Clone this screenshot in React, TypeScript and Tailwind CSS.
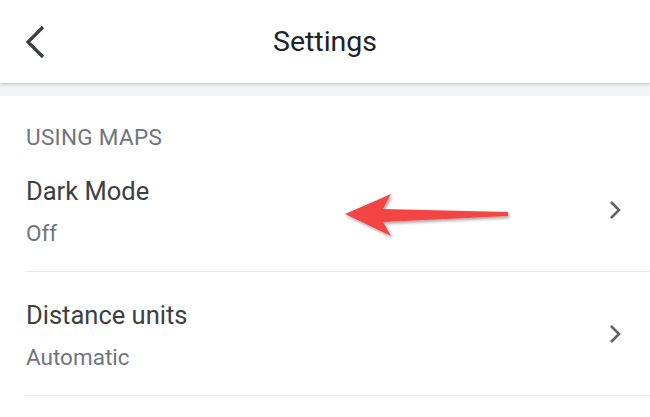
import React from 'react';

interface Item {
  title: string;
  value: string;
}

const items: Item[] = [
  { title: 'Dark Mode', value: 'Off' },
  { title: 'Distance units', value: 'Automatic' },
];

const ChevronRight: React.FC = () => (
  <svg width="14" height="20" viewBox="0 0 14 20" className="shrink-0">
    <path d="M3 2 L11 10 L3 18" fill="none" stroke="#5f6368" strokeWidth="2.6" />
  </svg>
);

const RedArrow: React.FC = () => (
  <svg
    className="absolute left-[340px] top-[188px] pointer-events-none"
    width="180"
    height="56"
    viewBox="340 188 180 56"
  >
    <defs>
      <filter id="sh" x="-10%" y="-30%" width="120%" height="160%">
        <feDropShadow dx="1.5" dy="2" stdDeviation="1.5" floodColor="#000" floodOpacity="0.35" />
      </filter>
    </defs>
    <polygon
      points="345,214 391,194 383,209 508,212 508,216 383,222 391,236"
      fill="#f44545"
      filter="url(#sh)"
    />
  </svg>
);

const App: React.FC = () => {
  return (
    <div
      className="relative w-[650px] h-[417px] bg-white overflow-hidden"
      style={{ fontFamily: 'Roboto, "Liberation Sans", sans-serif' }}
    >
      <header className="relative z-10 h-[83px] bg-white flex items-center shadow-[0_1px_3px_rgba(0,0,0,0.22)]">
        <div className="w-[70px] flex items-center pl-[24px]">
          <svg width="22" height="34" viewBox="0 0 22 34">
            <path d="M19 2 L4 17 L19 32" fill="none" stroke="#3c4043" strokeWidth="3.2" />
          </svg>
        </div>
        <h1 className="flex-1 text-center pr-[70px] text-[28.5px] leading-[32px] text-[#202124] font-normal">
          Settings
        </h1>
      </header>
      <div className="h-[13px] bg-[#f1f3f4]" />

      <div className="h-[52px] pl-[26px] pt-[28px]">
        <p className="text-[22.5px] leading-[26px] text-[#70757a] tracking-[0.3px]">USING MAPS</p>
      </div>

      {items.map(item => (
        <div
          key={item.title}
          className="ml-[25px] pl-[1px] h-[124px] border-b border-[#e8eaed] flex items-center pr-[28px]"
        >
          <div className="flex-1 flex flex-col h-full pt-[28px]">
            <p className="text-[25.5px] leading-[30px] text-[#3c4043]">{item.title}</p>
            <p className="mt-[14px] text-[22.5px] leading-[26px] text-[#70757a]">{item.value}</p>
          </div>
          <ChevronRight />
        </div>
      ))}

      <RedArrow />
    </div>
  );
};

export default App;
